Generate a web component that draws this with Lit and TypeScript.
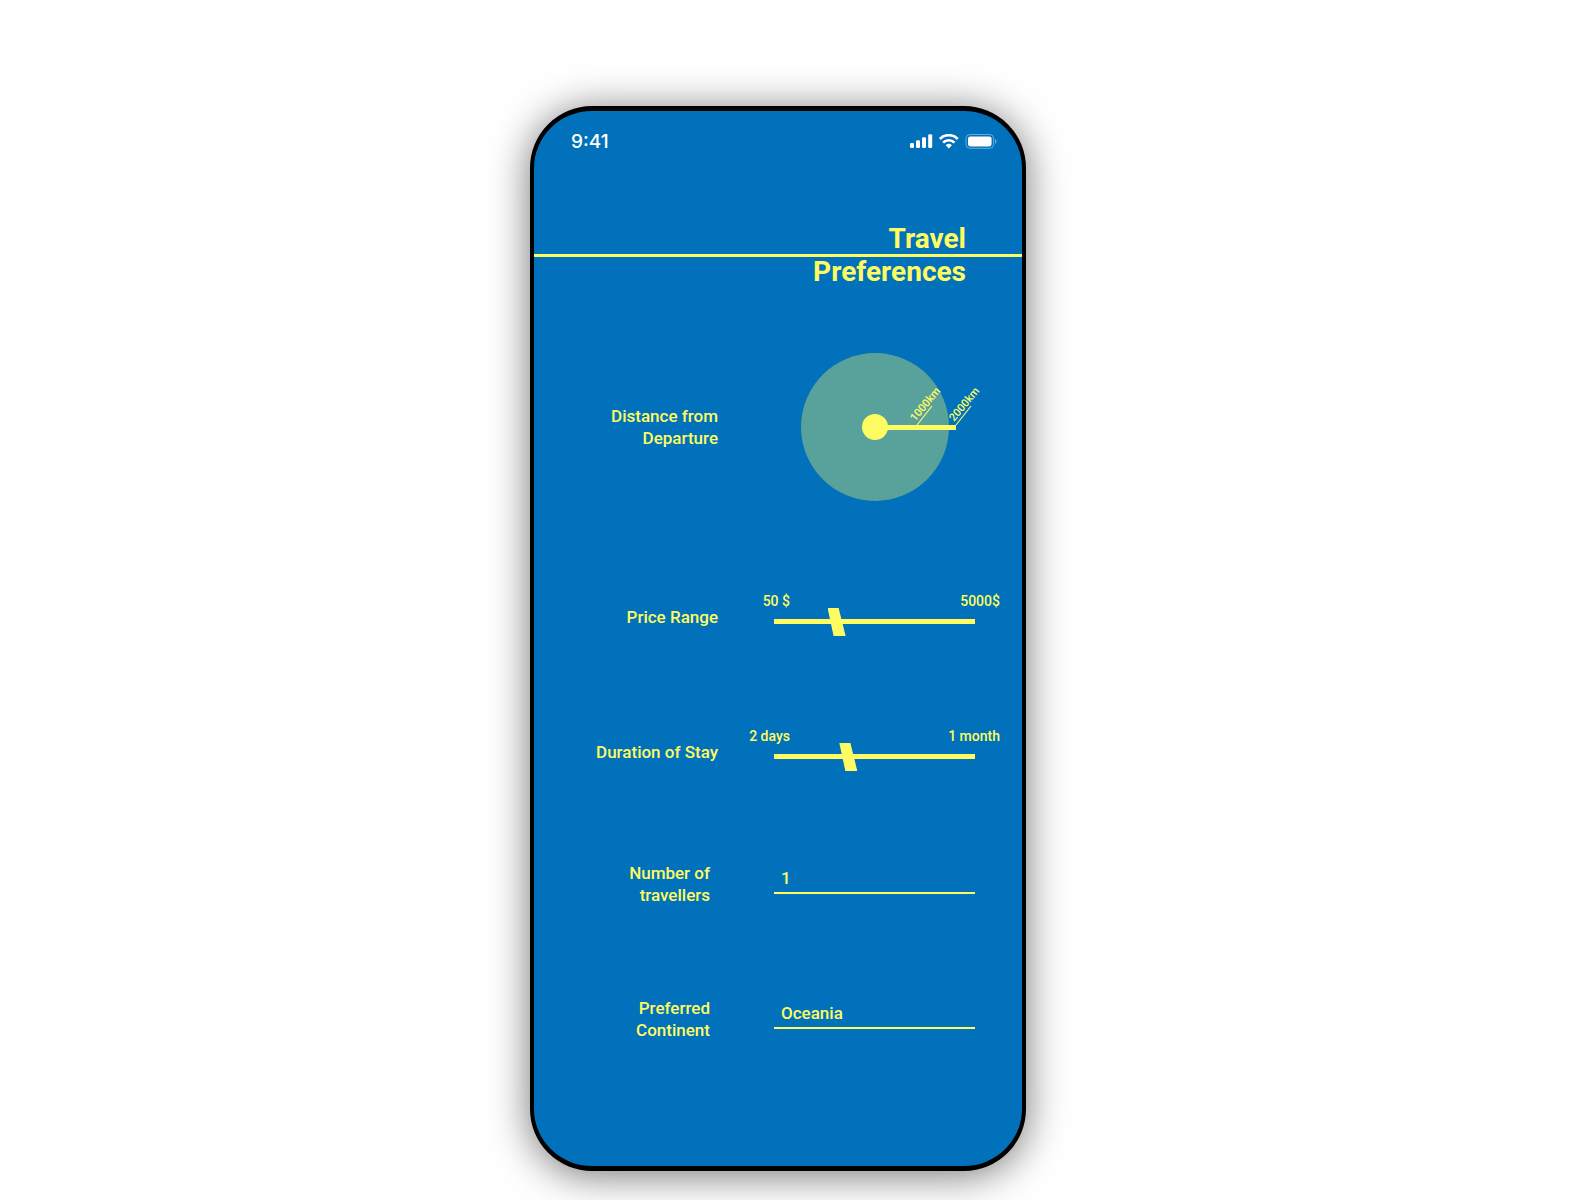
import { LitElement, html, css, svg } from "lit";
import { customElement, property, state } from "lit/decorators.js";

@customElement("status-bar")
class StatusBar extends LitElement {
  static styles = css`
    :host {
      display: flex;
      align-items: center;
      justify-content: space-between;
      padding: 19px 25px 0 37px;
      color: #fff;
    }
    .time {
      font-family: Inter, "Liberation Sans", sans-serif;
      font-size: 19px;
      line-height: 24px;
      font-weight: 500;
    }
    .icons {
      display: block;
    }
  `;

  render() {
    return html`
      <span class="time">9:41</span>
      <svg class="icons" width="88" height="16" viewBox="0 0 88 16" fill="#fff" role="img" aria-label="Signal, Wi-Fi and battery">
        <rect x="1" y="9" width="4" height="5" rx="1.2" />
        <rect x="7" y="6.2" width="4" height="7.8" rx="1.2" />
        <rect x="13" y="3.2" width="4" height="10.8" rx="1.2" />
        <rect x="19.2" y="0.2" width="4" height="13.8" rx="1.2" />
        <g fill="none" stroke="#fff" stroke-width="2.6">
          <path d="M30.8 5a12.4 12.4 0 0 1 18 0" />
          <path d="M34.1 8.7a8 8 0 0 1 11.4 0" />
        </g>
        <path d="M36.7 11.2a4.6 4.6 0 0 1 6.2 0L39.8 14.4z" />
        <rect x="57" y="0.5" width="27.6" height="13.8" rx="4" fill="none" stroke="#fff" stroke-opacity="0.4" />
        <rect x="59" y="2.4" width="23.6" height="10" rx="2.4" />
        <path d="M86 5v4.8a2.8 2.8 0 0 0 0-4.8z" fill-opacity="0.45" />
      </svg>
    `;
  }
}

@customElement("travel-preferences")
class TravelPreferences extends LitElement {
  @property({ type: Array }) continents: string[] = [
    "Africa",
    "Asia",
    "Europe",
    "North America",
    "Oceania",
    "South America",
  ];
  @state() private continent = "Oceania";

  static styles = css`
    :host {
      display: block;
      color: #fffc62;
    }
    .title {
      margin: 70px 0 66px;
      font-size: 28px;
      line-height: 30px;
      font-weight: 700;
      text-align: right;
    }
    .title-top,
    .title-bottom {
      display: block;
      padding-right: 56px;
    }
    .title-top {
      border-bottom: 3px solid currentColor;
    }
    .row {
      display: grid;
      grid-template-columns: 184px 1fr;
      column-gap: 56px;
      padding-right: 47px;
      align-items: center;
    }
    .slider-row {
      margin-top: 93px;
      align-items: end;
    }
    .field-row {
      margin-top: 91px;
      align-items: start;
    }
    .label {
      font-size: 17px;
      line-height: 22px;
      font-weight: 500;
      text-align: right;
    }
    .slider-row .label {
      padding-bottom: 8px;
    }
    .field-row .label {
      padding-right: 8px;
    }
    .line {
      display: block;
    }
    .scale {
      display: grid;
      grid-template-columns: 56px 1fr;
      margin: 0 -25px 0 -40px;
      font-size: 14px;
      line-height: 14px;
      font-weight: 500;
      text-align: right;
      white-space: nowrap;
    }
    input,
    select {
      appearance: none;
      box-sizing: border-box;
      display: block;
      width: 100%;
      margin: 0;
      border: 0;
      border-radius: 0;
      background: transparent;
      color: inherit;
      font: inherit;
    }
    .field {
      height: 32px;
      padding: 2px 7px 0;
      border-bottom: 2px solid currentColor;
      font-size: 17px;
      line-height: 22px;
      font-weight: 500;
    }
    .count {
      appearance: textfield;
    }
    .count::-webkit-inner-spin-button {
      appearance: none;
      margin: 0;
    }
    .range {
      height: 28px;
      cursor: pointer;
    }
    .range::-webkit-slider-runnable-track {
      height: 28px;
      background: linear-gradient(currentColor, currentColor) 0 11px / 100% 5px no-repeat;
    }
    .range::-webkit-slider-thumb {
      appearance: none;
      width: 18px;
      height: 28px;
      background: #fffc62;
      clip-path: polygon(0 0, 11px 0, 100% 100%, 6px 100%);
    }
    .radar {
      position: relative;
      width: 148px;
      height: 148px;
      margin-left: 27px;
      border-radius: 50%;
      background: rgb(255 252 98 / 35%);
    }
    .distance {
      position: absolute;
      left: 61px;
      top: 61px;
      width: 94px;
      height: 26px;
      cursor: pointer;
    }
    .distance::-webkit-slider-runnable-track {
      height: 26px;
      background: linear-gradient(currentColor, currentColor) right center / 81px 5px no-repeat;
    }
    .distance::-webkit-slider-thumb {
      appearance: none;
      width: 26px;
      height: 26px;
      border-radius: 50%;
      background: #fffc62;
    }
    .ticks {
      position: absolute;
      left: 100px;
      top: 4px;
      pointer-events: none;
      font-size: 11px;
      font-weight: 500;
    }
  `;

  private tick(x: number, text: string) {
    return svg`
      <path d="M${x} 68L${x + 15} 49" fill="none" stroke="currentColor" stroke-width="1.2" />
      <text transform="translate(${x - 2} 65) rotate(-50)" fill="currentColor">${text}</text>
    `;
  }

  private slider(id: string, label: string, low: string, high: string, min: number, max: number, value: number) {
    return html`
      <div class="row slider-row">
        <label class="label" for=${id}>${label}</label>
        <div>
          <div class="scale"><span>${low}</span><span>${high}</span></div>
          <input class="range" id=${id} type="range" min=${min} max=${max} .value=${String(value)} />
        </div>
      </div>
    `;
  }

  render() {
    return html`
      <h1 class="title">
        <span class="title-top">Travel</span>
        <span class="title-bottom">Preferences</span>
      </h1>
      <form>
        <div class="row">
          <label class="label" for="distance">
            <span class="line">Distance from</span>
            <span class="line">Departure</span>
          </label>
          <div class="radar">
            <input class="distance" id="distance" type="range" min="0" max="2000" .value=${"0"} />
            <svg class="ticks" width="100" height="72" viewBox="0 0 100 72">
              ${this.tick(16, "1000km")} ${this.tick(55, "2000km")}
            </svg>
          </div>
        </div>
        ${this.slider("price", "Price Range", "50 $", "5000$", 50, 5000, 1500)}
        ${this.slider("stay", "Duration of Stay", "2 days", "1 month", 2, 30, 12)}
        <div class="row field-row">
          <label class="label" for="travellers">
            <span class="line">Number of</span>
            <span class="line">travellers</span>
          </label>
          <input class="field count" id="travellers" type="number" min="1" .value=${"1"} />
        </div>
        <div class="row field-row">
          <label class="label" for="continent">
            <span class="line">Preferred</span>
            <span class="line">Continent</span>
          </label>
          <select
            class="field"
            id="continent"
            @change=${(e: Event) => (this.continent = (e.target as HTMLSelectElement).value)}
          >
            ${this.continents.map(
              (name) => html`<option value=${name} ?selected=${name === this.continent}>${name}</option>`
            )}
          </select>
        </div>
      </form>
    `;
  }
}

@customElement("app-root")
class AppRoot extends LitElement {
  static styles = css`
    :host {
      display: flex;
      justify-content: center;
      box-sizing: border-box;
      min-height: 100vh;
      padding: 106px 21px 29px 0;
      background: #fff;
      font-family: Roboto, "Liberation Sans", sans-serif;
      overflow: hidden;
    }
    .phone {
      box-sizing: border-box;
      width: 100%;
      max-width: 496px;
      padding-bottom: 120px;
      border: solid #000;
      border-width: 5px 4px;
      border-radius: 62px;
      background: #0071ba;
      box-shadow: 0 4px 40px rgb(0 0 0 / 55%);
    }
  `;

  render() {
    return html`
      <main class="phone">
        <status-bar></status-bar>
        <travel-preferences></travel-preferences>
      </main>
    `;
  }
}
